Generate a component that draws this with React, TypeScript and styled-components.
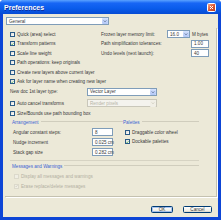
import React from 'react';
import styled, { createGlobalStyle } from 'styled-components';

const GlobalStyle = createGlobalStyle`
  html, body {
    margin: 0;
    padding: 0;
    background: #ffffff;
  }

  body {
    font-family: "Liberation Sans", Arial, sans-serif;
    font-size: 4.6px;
    color: #383838;
  }
`;

const Window = styled.div`
  width: 221px;
  height: 220px;
  display: flex;
  flex-direction: column;
  background: #0d45d6;
  border-radius: 4px 4px 0 0;
  overflow: hidden;
`;

const TitleBar = styled.div`
  flex: none;
  height: 14px;
  display: flex;
  align-items: center;
  justify-content: space-between;
  padding: 0 5px 0 4px;
  background: linear-gradient(#5aa2ff 0%, #1766f5 22%, #0a5ceb 60%, #064bd3 100%);
  color: #ffffff;
  font-size: 7px;
  font-weight: bold;
  text-shadow: 0.5px 0.5px 0 #0a2a9a;
`;

const CloseButton = styled.div`
  width: 7px;
  height: 7px;
  display: flex;
  align-items: center;
  justify-content: center;
  border: 0.5px solid #ffffff;
  border-radius: 1.5px;
  background: linear-gradient(135deg, #f3a58c 0%, #de5a35 50%, #bb3d1c 100%);
`;

const Frame = styled.div`
  flex: 1;
  display: flex;
  flex-direction: column;
  margin: 0 3px 3px;
  padding: 3px 1px 0 2px;
  background: #ece9d8;
`;

const SelectBox = styled.div<{ $width: number; $disabled?: boolean }>`
  width: ${(p) => p.$width}px;
  height: 8px;
  box-sizing: border-box;
  display: flex;
  align-items: center;
  justify-content: space-between;
  padding-left: 2px;
  border: 0.5px solid ${(p) => (p.$disabled ? '#c9c7ba' : '#7f9db9')};
  background: ${(p) => (p.$disabled ? '#f4f3ee' : '#ffffff')};
  color: ${(p) => (p.$disabled ? '#b6b3a5' : 'inherit')};
`;

const ArrowButton = styled.div<{ $disabled?: boolean }>`
  width: 6px;
  height: 6.5px;
  margin-right: 0.5px;
  display: flex;
  align-items: center;
  justify-content: center;
  border-radius: 1px;
  background: ${(p) => (p.$disabled
    ? '#f1efe6'
    : 'linear-gradient(#d4e1fd, #b2c7f7)')};
`;

const TopSelect = styled(SelectBox)`
  margin-left: 1px;
`;

const Panel = styled.div`
  height: 169px;
  margin-top: 3px;
  padding: 1.25px 5px 0;
  box-sizing: border-box;
  border-right: 1px solid #c4c1b0;
  border-bottom: 1px solid #c4c1b0;
  box-shadow: 1px 1px 0 #ffffff;
  display: flex;
  flex-direction: column;
`;

const TopGrid = styled.div`
  display: grid;
  grid-template-columns: 91px 1fr;
  grid-template-rows: repeat(6, 9.5px);
  grid-auto-flow: column;
`;

const Row = styled.div<{ $height?: number; $indent?: number }>`
  height: ${(p) => p.$height ?? 9.5}px;
  display: flex;
  align-items: center;
  padding-left: ${(p) => p.$indent ?? 0}px;
  white-space: nowrap;
`;

const Label = styled.span<{ $width?: number; $disabled?: boolean }>`
  flex: none;
  width: ${(p) => (p.$width ? `${p.$width}px` : 'auto')};
  color: ${(p) => (p.$disabled ? '#b3b0a2' : 'inherit')};
  white-space: nowrap;
`;

const Box = styled.span<{ $disabled?: boolean }>`
  flex: none;
  width: 5px;
  height: 5px;
  margin-right: 2px;
  box-sizing: border-box;
  display: flex;
  align-items: center;
  justify-content: center;
  border: 0.5px solid ${(p) => (p.$disabled ? '#dcd9cb' : '#2a5a86')};
  background: ${(p) => (p.$disabled ? '#f0eee4' : 'linear-gradient(135deg, #dcdbd5, #ffffff)')};
`;

const TextInput = styled.div<{ $width: number }>`
  flex: none;
  width: ${(p) => p.$width}px;
  height: 8px;
  box-sizing: border-box;
  display: flex;
  align-items: center;
  padding-left: 2px;
  border: 0.5px solid #7f9db9;
  background: #ffffff;
`;

const Suffix = styled.span`
  margin-left: 2px;
`;

const GroupsRow = styled.div`
  display: grid;
  grid-template-columns: 113px 1fr;
  margin-right: 12px;
  padding-bottom: 3px;
  border-bottom: 1px solid #d6d3c3;
`;

const Group = styled.div<{ $indent: number }>`
  display: flex;
  flex-direction: column;
  padding-left: ${(p) => p.$indent}px;
`;

const GroupHeading = styled.div<{ $height?: number }>`
  height: ${(p) => p.$height ?? 9.75}px;
  display: flex;
  align-items: center;
  gap: 2px;
  color: #3b63d3;

  &::after {
    content: '';
    flex: 1;
    height: 0.5px;
    margin-top: -1.5px;
    background: #d0cdbd;
  }
`;

const MessagesGroup = styled.div`
  display: flex;
  flex-direction: column;
  padding-left: 2px;
  margin-right: 12px;
`;

const ButtonRow = styled.div`
  display: flex;
  justify-content: flex-end;
  gap: 10px;
  margin-top: 9px;
  margin-right: 5px;
`;

const Button = styled.div<{ $width: number; $default?: boolean }>`
  width: ${(p) => p.$width}px;
  height: 7px;
  box-sizing: border-box;
  display: flex;
  align-items: center;
  justify-content: center;
  border: 0.5px solid #003c74;
  border-radius: 1.5px;
  background: linear-gradient(#ffffff, #f0efe9 70%, #d8d3c6);
  box-shadow: ${(p) => (p.$default ? 'inset 0 0 0 0.75px #8fb2ee' : 'none')};
`;

function Chevron ({ disabled = false }: { disabled?: boolean }): React.ReactElement {
  return (
    <svg height='4' viewBox='0 0 8 8' width='4'>
      <polyline
        fill='none'
        points='1.5,3 4,5.5 6.5,3'
        stroke={disabled ? '#c9c6b8' : '#4d6185'}
        strokeWidth='1.6'
      />
    </svg>
  );
}

function Select ({ disabled, value, width }: { value: string; width: number; disabled?: boolean }): React.ReactElement {
  return (
    <SelectBox $disabled={disabled} $width={width}>
      <span>{value}</span>
      <ArrowButton $disabled={disabled}>
        <Chevron disabled={disabled} />
      </ArrowButton>
    </SelectBox>
  );
}

interface CheckProps {
  label: string;
  checked?: boolean;
  disabled?: boolean;
  width?: number;
}

function Check ({ checked = false, disabled = false, label, width }: CheckProps): React.ReactElement {
  return (
    <>
      <Box $disabled={disabled}>
        {checked && (
          <svg height='4' viewBox='0 0 8 8' width='4'>
            <polyline
              fill='none'
              points='1.2,4 3.2,6 6.8,1.8'
              stroke={disabled ? '#c3c0b1' : '#21a121'}
              strokeWidth='1.6'
            />
          </svg>
        )}
      </Box>
      <Label $disabled={disabled} $width={width}>{label}</Label>
    </>
  );
}

const leftChecks = [
  { label: 'Quick (area) select', checked: false },
  { label: 'Transform patterns', checked: true },
  { label: 'Scale line weight', checked: false },
  { label: 'Path operations: keep originals', checked: false },
  { label: 'Create new layers above current layer', checked: false },
  { label: 'Ask for layer name when creating new layer', checked: true }
];

const arrangement = [
  { label: 'Angular constant steps:', value: '8' },
  { label: 'Nudge increment', value: '0.025 cm' },
  { label: 'Stack gap size', value: '0.282 cm' }
];

export default function App (): React.ReactElement {
  return (
    <>
      <GlobalStyle />
      <Window>
        <TitleBar>
          <span>Preferences</span>
          <CloseButton>
            <svg height='5' viewBox='0 0 8 8' width='5'>
              <path
                d='M1.5 1.5 L6.5 6.5 M6.5 1.5 L1.5 6.5'
                stroke='#ffffff'
                strokeWidth='1.6'
              />
            </svg>
          </CloseButton>
        </TitleBar>
        <Frame>
          <TopSelect $width={103}>
            <span>General</span>
            <ArrowButton>
              <Chevron />
            </ArrowButton>
          </TopSelect>

          <Panel>
            <TopGrid>
              {leftChecks.map((item) => (
                <Row key={item.label}>
                  <Check
                    checked={item.checked}
                    label={item.label}
                  />
                </Row>
              ))}
              <Row>
                <Label $width={66}>Frozen layer memory limit:</Label>
                <Select
                  value='16.0'
                  width={23}
                />
                <Suffix>M bytes</Suffix>
              </Row>
              <Row>
                <Label $width={90}>Path simplification tolerances:</Label>
                <TextInput $width={18}>1.00</TextInput>
              </Row>
              <Row>
                <Label $width={90}>Undo levels (next launch):</Label>
                <TextInput $width={18}>40</TextInput>
              </Row>
            </TopGrid>

            <Row $height={11}>
              <Label $width={77}>New doc 1st layer type:</Label>
              <Select
                value='Vector Layer'
                width={70}
              />
            </Row>
            <Row $height={12}>
              <Check
                label='Auto cancel transforms'
                width={70}
              />
              <Select
                disabled
                value='Render pixels'
                width={70}
              />
            </Row>
            <Row $height={8}>
              <Check label='Size/Bounds use path bounding box' />
            </Row>

            <GroupsRow>
              <Group $indent={2}>
                <GroupHeading>Arrangement</GroupHeading>
                {arrangement.map((item) => (
                  <Row
                    $height={10}
                    $indent={1}
                    key={item.label}
                  >
                    <Label $width={79}>{item.label}</Label>
                    <TextInput $width={21}>{item.value}</TextInput>
                  </Row>
                ))}
              </Group>
              <Group $indent={0}>
                <GroupHeading>Palettes</GroupHeading>
                <Row
                  $height={10}
                  $indent={2}
                >
                  <Check label='Draggable color wheel' />
                </Row>
                <Row
                  $height={9}
                  $indent={2}
                >
                  <Check
                    checked
                    label='Dockable palettes'
                  />
                </Row>
              </Group>
            </GroupsRow>

            <MessagesGroup>
              <GroupHeading $height={10}>Messages and Warnings</GroupHeading>
              <Row
                $height={10}
                $indent={2}
              >
                <Check
                  disabled
                  label='Display all messages and warnings'
                />
              </Row>
              <Row
                $height={10}
                $indent={2}
              >
                <Check
                  checked
                  disabled
                  label='Erase replace/delete messages'
                />
              </Row>
            </MessagesGroup>
          </Panel>

          <ButtonRow>
            <Button
              $default
              $width={22}
            >
              OK
            </Button>
            <Button $width={29}>Cancel</Button>
          </ButtonRow>
        </Frame>
      </Window>
    </>
  );
}
